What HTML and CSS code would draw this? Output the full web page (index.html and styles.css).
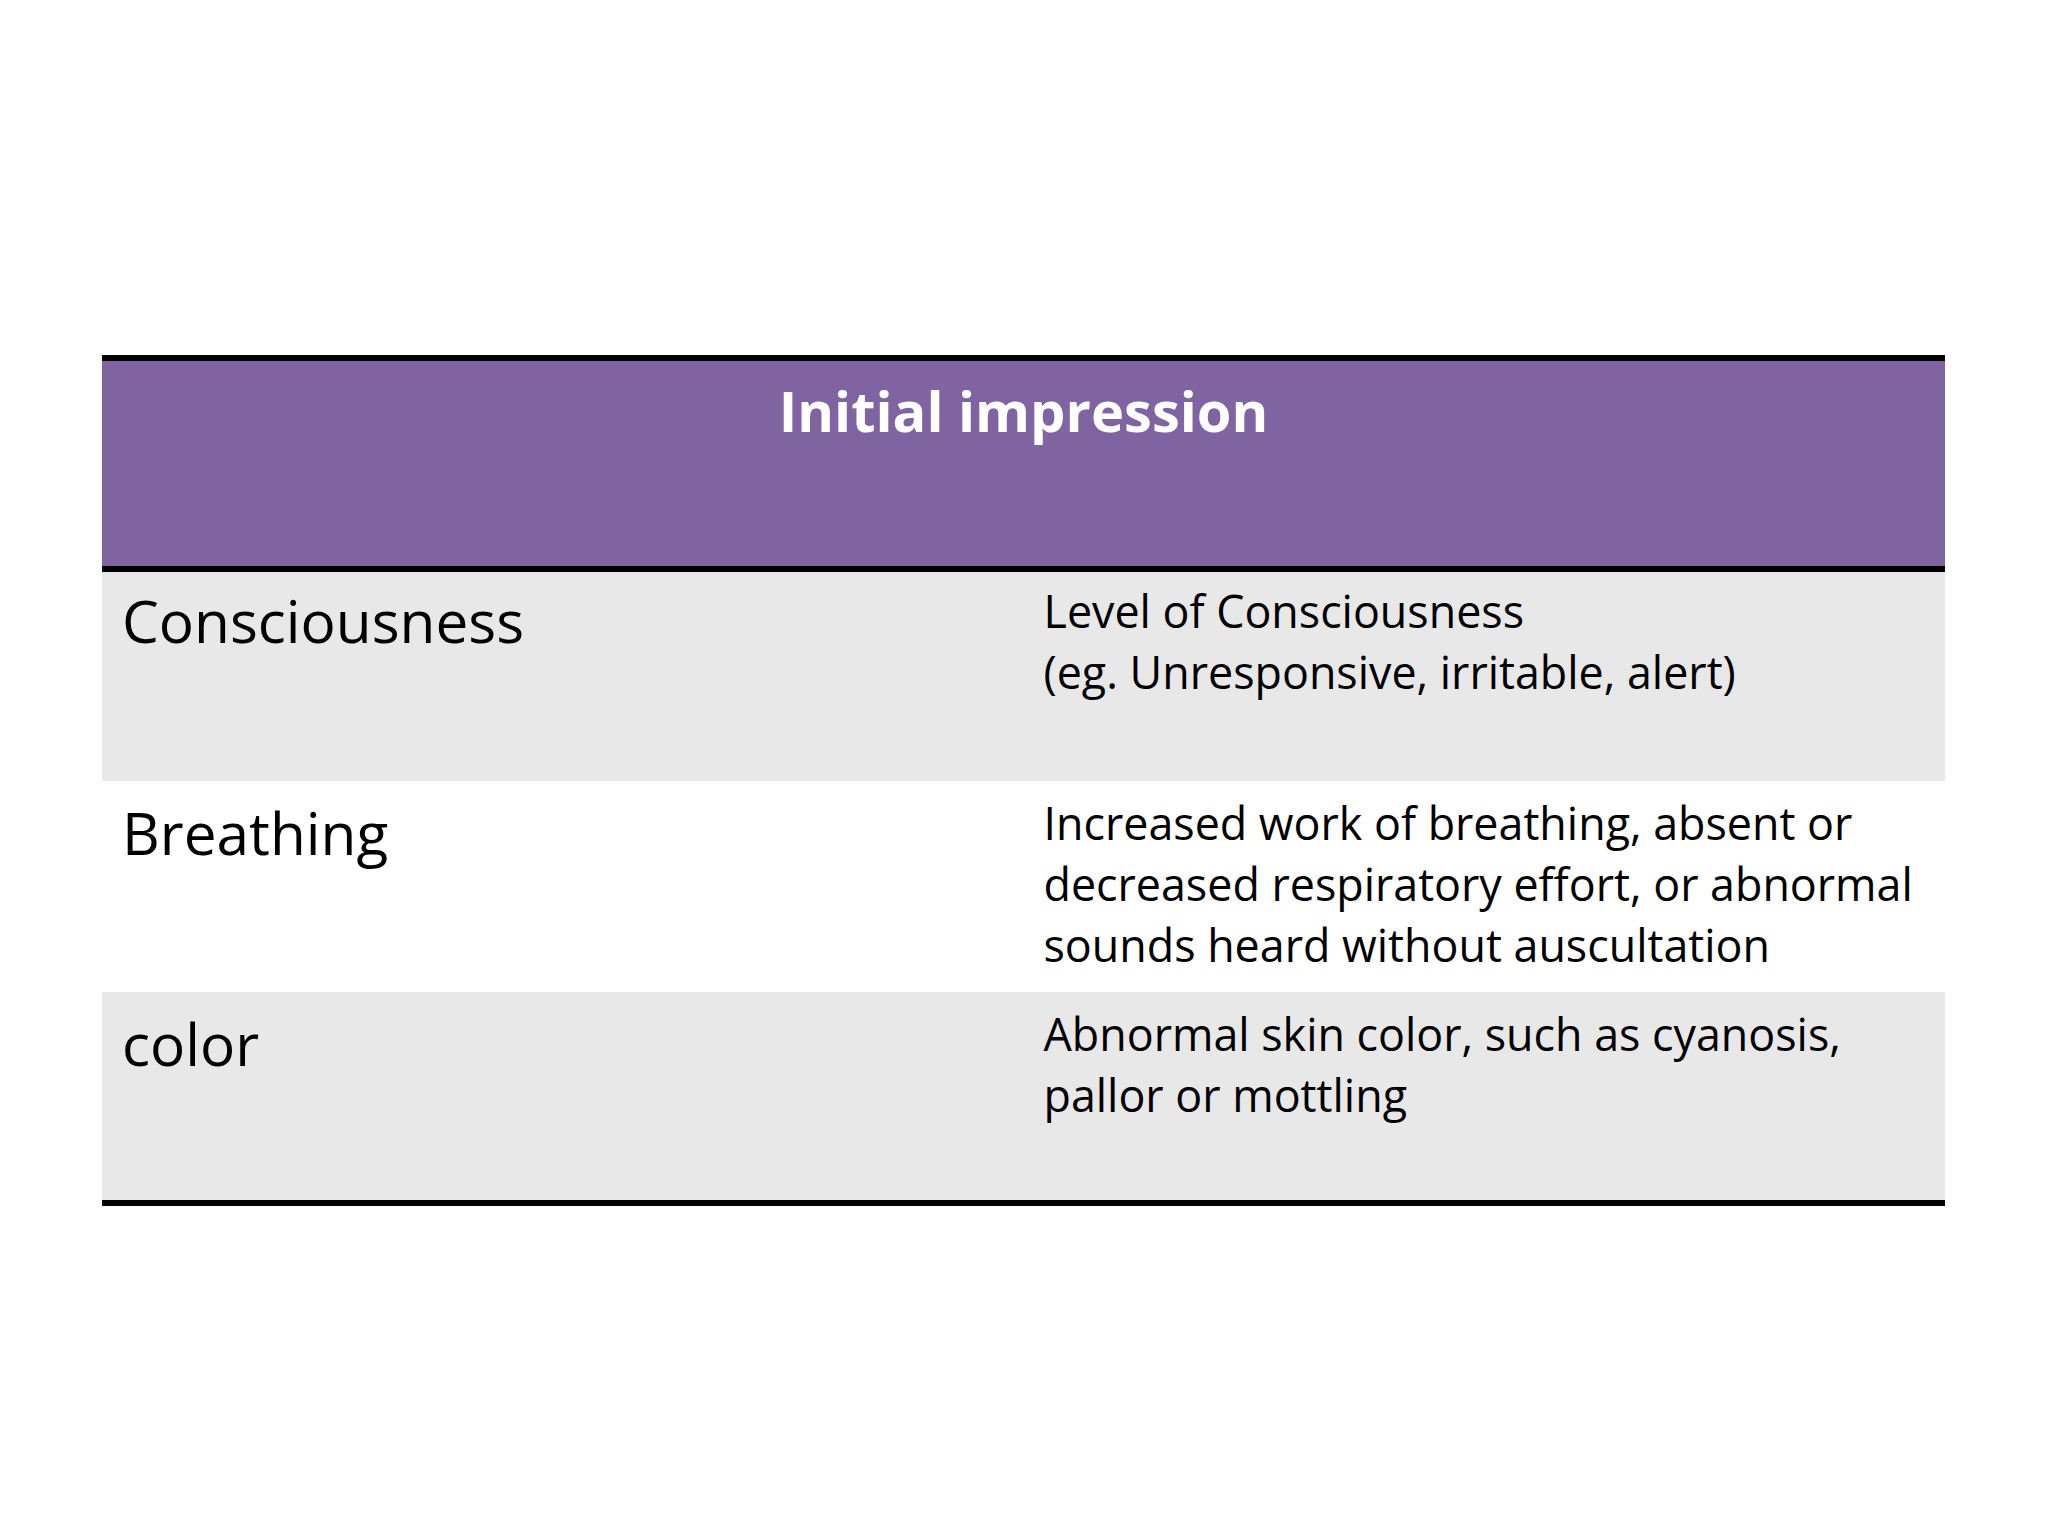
FILE: index.html
```html
<!DOCTYPE html>
<html lang="en">
<head>
<meta charset="utf-8">
<title>Initial impression</title>
<link rel="stylesheet" href="styles.css">
</head>
<body>
<main class="slide">
  <section class="table">
    <header class="table-head">
      <h1 class="table-title">Initial impression</h1>
    </header>
    <div class="row row-shaded row-first">
      <div class="cell cell-label">Consciousness</div>
      <div class="cell cell-desc">Level of Consciousness<br>(eg. Unresponsive, irritable, alert)</div>
    </div>
    <div class="row row-plain">
      <div class="cell cell-label">Breathing</div>
      <div class="cell cell-desc">Increased work of breathing, absent or decreased respiratory effort, or abnormal sounds heard without auscultation</div>
    </div>
    <div class="row row-shaded row-last">
      <div class="cell cell-label">color</div>
      <div class="cell cell-desc">Abnormal skin color, such as cyanosis, pallor or mottling</div>
    </div>
  </section>
</main>
</body>
</html>
```

FILE: styles.css
```css
html, body {
  margin: 0;
  padding: 0;
  background: #ffffff;
}

body {
  width: 2048px;
  height: 1536px;
  overflow: hidden;
  font-family: "Open Sans", "Noto Sans", "Liberation Sans", sans-serif;
  color: #000000;
}

.slide {
  width: 2048px;
  height: 1536px;
  padding: 355px 0 0 102px;
  box-sizing: border-box;
}

.table {
  width: 1843px;
  border-top: 6px solid #000000;
  border-bottom: 6px solid #000000;
}

.table-head {
  height: 211px;
  box-sizing: border-box;
  background: #8064a2;
  border-bottom: 6px solid #000000;
  padding: 17px 20px 0 20px;
  text-align: center;
}

.table-title {
  margin: 0;
  font-size: 56px;
  line-height: 64px;
  font-weight: 700;
  color: #ffffff;
}

.row {
  display: grid;
  grid-template-columns: 1fr 1fr;
  height: 209px;
}

.row-plain {
  height: 211px;
  background: #ffffff;
}

.row-last {
  height: 208px;
}

.row-shaded {
  background: #e8e8e8;
}

.cell {
  padding: 0 20px;
}

.cell-label {
  font-size: 58.5px;
  line-height: 69px;
  padding-top: 17px;
}

.cell-desc {
  font-size: 44.8px;
  line-height: 61px;
  padding-top: 11px;
}

.row-first .cell-label {
  padding-top: 14px;
}

.row-first .cell-desc {
  padding-top: 8px;
}
```
